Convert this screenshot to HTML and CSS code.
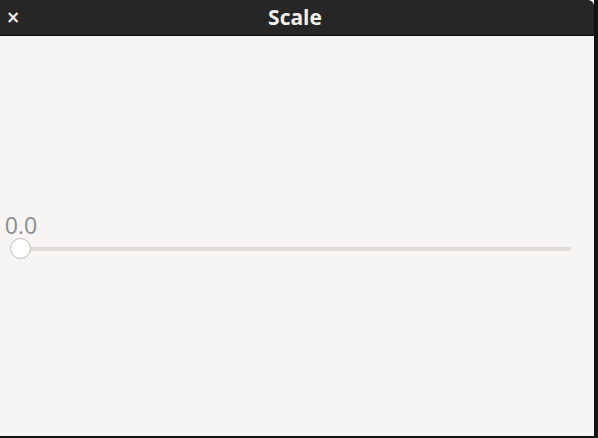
FILE: index.html
```html
<!DOCTYPE html>
<html>
<head>
<meta charset="utf-8">
<link rel="stylesheet" href="styles.css">
</head>
<body>
<div class="window">
  <div class="titlebar">
    <span class="close">×</span>
    <span class="title">Scale</span>
  </div>
  <div class="content">
    <div class="scale">
      <div class="value">0.0</div>
      <div class="track">
        <div class="trough"></div>
        <div class="knob"></div>
      </div>
    </div>
  </div>
</div>
</body>
</html>
```
FILE: styles.css
```css
html, body {
  margin: 0;
  padding: 0;
  width: 598px;
  height: 438px;
  overflow: hidden;
  background: #141414;
}
.window {
  width: 594px;
  height: 436px;
  border-right: 1px solid #0c0c0c;
  display: flex;
  flex-direction: column;
  background: #f6f5f4;
}
.titlebar {
  height: 35px;
  flex: none;
  background: #262626;
  border-bottom: 1px solid #0e0e0e;
  border-top-right-radius: 6px;
  position: relative;
  display: flex;
  align-items: center;
  justify-content: center;
}
.close {
  position: absolute;
  left: 6px;
  top: 5px;
  color: #eeeeec;
  font-family: "DejaVu Sans", sans-serif;
  font-weight: bold;
  font-size: 17px;
  line-height: 24px;
}
.title {
  color: #eeeeec;
  font-family: "Open Sans", "DejaVu Sans", sans-serif;
  font-weight: bold;
  font-size: 21px;
  line-height: 35px;
  margin-right: 4px;
}
.content {
  flex: 1;
  display: flex;
  flex-direction: column;
  justify-content: center;
}
.scale {
  display: flex;
  flex-direction: column;
  padding: 0 23px 0 5px;
  margin-top: 2px;
}
.value {
  font-family: "Liberation Sans", Arial, sans-serif;
  font-size: 23px;
  line-height: 24px;
  color: #8e9192;
}
.track {
  position: relative;
  height: 22px;
  margin-left: 5px;
}
.trough {
  position: absolute;
  left: 0;
  right: 0;
  top: 9px;
  height: 4px;
  border-radius: 2px;
  background: #dfdcd8;
}
.knob {
  position: absolute;
  left: 0;
  top: 0;
  width: 19px;
  height: 19px;
  border-radius: 50%;
  background: #ffffff;
  border: 1px solid #bfbab4;
}
```
